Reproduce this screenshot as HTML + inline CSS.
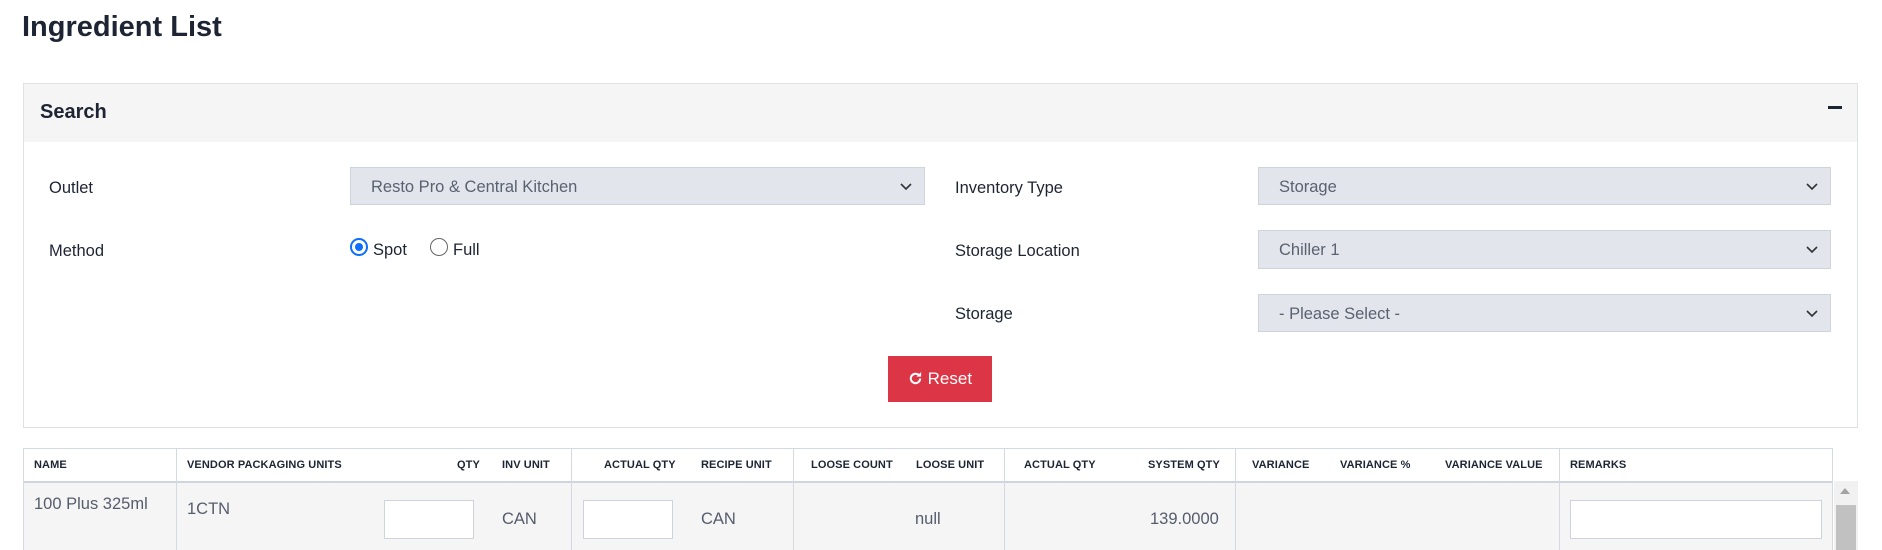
<!DOCTYPE html>
<html><head><style>
*{box-sizing:border-box;margin:0;padding:0}
body{width:1882px;height:550px;overflow:hidden;background:#fff;font-family:"Liberation Sans",sans-serif;color:#1d2433;position:relative}
.a{position:absolute;white-space:nowrap}
.sel{position:absolute;background:#e2e5ec;border:1px solid #cfd3dc;color:#5a6170;font-size:16.5px;padding-left:20px;line-height:39px}
.sel svg{position:absolute;right:12px;top:15px}
.lbl{position:absolute;font-size:16.5px;color:#1d2433}
.th{position:absolute;top:459px;font-size:11px;font-weight:bold;color:#1d2433;letter-spacing:.1px}
.vl{position:absolute;top:448px;height:102px;width:1px;background:#d5d9e2}
.inp{position:absolute;background:#fff;border:1px solid #cfd3dc}
.td{position:absolute;font-size:16.5px;color:#555c6b}
</style></head><body>
<div class="a" style="left:22px;top:11px;font-size:29px;font-weight:bold;color:#1d2433">Ingredient List</div>

<div class="a" style="left:23px;top:83px;width:1835px;height:345px;border:1px solid #dfe1e5"></div>
<div class="a" style="left:24px;top:84px;width:1833px;height:58px;background:#f5f5f5"></div>
<div class="a" style="left:40px;top:101px;font-size:20px;font-weight:bold">Search</div>
<div class="a" style="left:1828px;top:106px;width:14px;height:3px;background:#1d2433"></div>

<div class="lbl" style="left:49px;top:179px">Outlet</div>
<div class="sel" style="left:350px;top:167px;width:575px;height:38px">Resto Pro &amp; Central Kitchen<svg width="12" height="8"><path d="M1 1l5 5 5-5" stroke="#333" stroke-width="1.6" fill="none"/></svg></div>
<div class="lbl" style="left:49px;top:242px">Method</div>
<div class="a" style="left:350px;top:238px;width:18px;height:18px;border-radius:50%;border:2px solid #0d6efd;background:#fff"><div style="position:absolute;left:3px;top:3px;width:8px;height:8px;border-radius:50%;background:#0d6efd"></div></div>
<div class="lbl" style="left:373px;top:241px">Spot</div>
<div class="a" style="left:430px;top:238px;width:18px;height:18px;border-radius:50%;border:1px solid #666;background:#fff"></div>
<div class="lbl" style="left:453px;top:241px">Full</div>

<div class="lbl" style="left:955px;top:179px">Inventory Type</div>
<div class="sel" style="left:1258px;top:167px;width:573px;height:38px">Storage<svg width="12" height="8"><path d="M1 1l5 5 5-5" stroke="#333" stroke-width="1.6" fill="none"/></svg></div>
<div class="lbl" style="left:955px;top:242px">Storage Location</div>
<div class="sel" style="left:1258px;top:230px;width:573px;height:39px">Chiller 1<svg width="12" height="8"><path d="M1 1l5 5 5-5" stroke="#333" stroke-width="1.6" fill="none"/></svg></div>
<div class="lbl" style="left:955px;top:305px">Storage</div>
<div class="sel" style="left:1258px;top:294px;width:573px;height:38px">- Please Select -<svg width="12" height="8"><path d="M1 1l5 5 5-5" stroke="#333" stroke-width="1.6" fill="none"/></svg></div>

<div class="a" style="left:888px;top:356px;width:104px;height:46px;background:#dc3545;color:#fff;font-size:17px;line-height:46px;text-align:center">
<svg width="15" height="15" viewBox="0 0 16 16" style="vertical-align:-2px"><path d="M13 8a5 5 0 1 1-1.5-3.6" stroke="#fff" stroke-width="2.2" fill="none"/><path d="M14 1v5h-5z" fill="#fff"/></svg> Reset</div>

<div class="a" style="left:23px;top:448px;width:1810px;height:102px;border:1px solid #d5d9e2;border-bottom:none"></div>
<div class="a" style="left:24px;top:481px;width:1808px;height:69px;background:#f5f5f5;border-top:2px solid #d0d4df"></div>
<div class="vl" style="left:176px"></div><div class="vl" style="left:571px"></div><div class="vl" style="left:793px"></div><div class="vl" style="left:1004px"></div><div class="vl" style="left:1235px"></div><div class="vl" style="left:1559px"></div>
<div class="th" style="left:34px">NAME</div>
<div class="th" style="left:187px">VENDOR PACKAGING UNITS</div>
<div class="th" style="left:457px">QTY</div>
<div class="th" style="left:502px">INV UNIT</div>
<div class="th" style="left:604px">ACTUAL QTY</div>
<div class="th" style="left:701px">RECIPE UNIT</div>
<div class="th" style="left:811px">LOOSE COUNT</div>
<div class="th" style="left:916px">LOOSE UNIT</div>
<div class="th" style="left:1024px">ACTUAL QTY</div>
<div class="th" style="left:1148px">SYSTEM QTY</div>
<div class="th" style="left:1252px">VARIANCE</div>
<div class="th" style="left:1340px">VARIANCE %</div>
<div class="th" style="left:1445px">VARIANCE VALUE</div>
<div class="th" style="left:1570px">REMARKS</div>

<div class="td" style="left:34px;top:495px">100 Plus 325ml</div>
<div class="td" style="left:187px;top:500px">1CTN</div>
<div class="inp" style="left:384px;top:500px;width:90px;height:39px"></div>
<div class="td" style="left:502px;top:510px">CAN</div>
<div class="inp" style="left:583px;top:500px;width:90px;height:39px"></div>
<div class="td" style="left:701px;top:510px">CAN</div>
<div class="td" style="left:915px;top:510px">null</div>
<div class="td" style="left:1150px;top:510px">139.0000</div>
<div class="inp" style="left:1570px;top:500px;width:252px;height:39px"></div>
<div class="a" style="left:1834px;top:481px;width:24px;height:69px;background:#f1f1f1"></div>
<div class="a" style="left:1840px;top:488px;width:0;height:0;border-left:5px solid transparent;border-right:5px solid transparent;border-bottom:6px solid #a3a3a3"></div>
<div class="a" style="left:1836px;top:505px;width:20px;height:45px;background:#c1c1c1"></div>
</body></html>
